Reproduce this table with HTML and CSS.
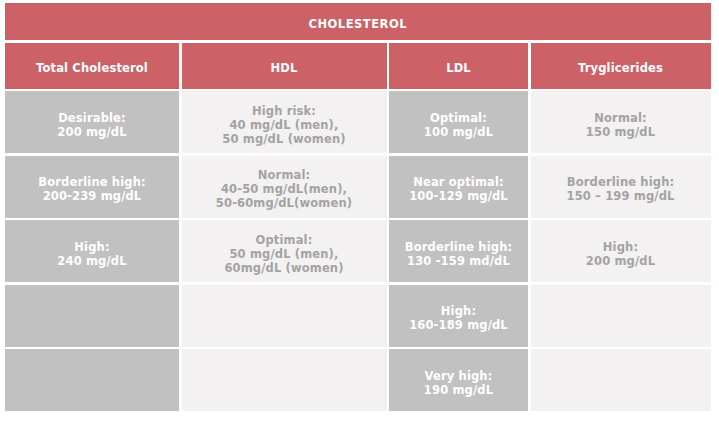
FILE: index.html
```html
<!DOCTYPE html>
<html>
<head>
<meta charset="utf-8">
<link rel="stylesheet" href="styles.css">
</head>
<body>
<div class="table">
  <div class="title">CHOLESTEROL</div>
  <div class="head">Total Cholesterol</div>
  <div class="head">HDL</div>
  <div class="head">LDL</div>
  <div class="head">Tryglicerides</div>

  <div class="cell dark">Desirable:<br>200 mg/dL</div>
  <div class="cell light">High risk:<br>40 mg/dL (men),<br>50 mg/dL (women)</div>
  <div class="cell dark">Optimal:<br>100 mg/dL</div>
  <div class="cell light">Normal:<br>150 mg/dL</div>

  <div class="cell dark">Borderline high:<br>200-239 mg/dL</div>
  <div class="cell light">Normal:<br>40-50 mg/dL(men),<br>50-60mg/dL(women)</div>
  <div class="cell dark">Near optimal:<br>100-129 mg/dL</div>
  <div class="cell light">Borderline high:<br>150 – 199 mg/dL</div>

  <div class="cell dark">High:<br>240 mg/dL</div>
  <div class="cell light">Optimal:<br>50 mg/dL (men),<br>60mg/dL (women)</div>
  <div class="cell dark">Borderline high:<br>130 -159 md/dL</div>
  <div class="cell light">High:<br>200 mg/dL</div>

  <div class="cell dark"></div>
  <div class="cell light"></div>
  <div class="cell dark">High:<br>160-189 mg/dL</div>
  <div class="cell light"></div>

  <div class="cell dark"></div>
  <div class="cell light"></div>
  <div class="cell dark">Very high:<br>190 mg/dL</div>
  <div class="cell light"></div>
</div>
</body>
</html>
```
FILE: styles.css
```css
html, body {
  margin: 0;
  padding: 0;
  background: #ffffff;
}
body {
  padding: 3px 0 0 5px;
  font-family: "DejaVu Sans", "Open Sans", sans-serif;
  font-weight: bold;
}
.table {
  display: grid;
  grid-template-columns: 174px 205px 139px 180px;
  grid-template-rows: 37px 46px repeat(5, 62px);
  gap: 2.5px;
  width: 706px;
}
.title {
  grid-column: 1 / -1;
  background: #cc6268;
  color: #ffffff;
  font-size: 11.5px;
  letter-spacing: 0.5px;
  padding-top: 5px;
  display: flex;
  align-items: center;
  justify-content: center;
}
.head {
  background: #cc6268;
  color: #ffffff;
  font-size: 11.5px;
  letter-spacing: 0.15px;
  padding-top: 5px;
  display: flex;
  align-items: center;
  justify-content: center;
}
.cell {
  display: flex;
  align-items: center;
  justify-content: center;
  text-align: center;
  font-size: 11.5px;
  line-height: 14px;
  letter-spacing: 0.15px;
  padding-top: 5px;
}
.dark {
  background: #c1c1c1;
  color: #ffffff;
}
.light {
  background: #f3f1f2;
  color: #a3a3a3;
}
```
